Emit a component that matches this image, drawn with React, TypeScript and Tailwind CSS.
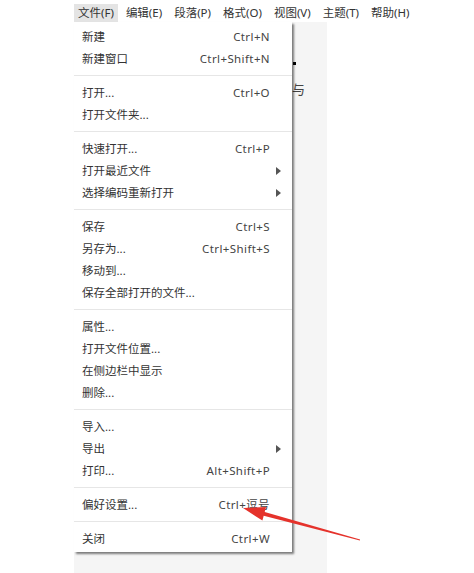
import React from 'react';

type Item = { label: string; shortcut?: string; sub?: boolean } | 'sep';

const menuBar = ['文件(F)', '编辑(E)', '段落(P)', '格式(O)', '视图(V)', '主题(T)', '帮助(H)'];

const items: Item[] = [
    { label: '新建', shortcut: 'Ctrl+N' },
    { label: '新建窗口', shortcut: 'Ctrl+Shift+N' },
    'sep',
    { label: '打开...', shortcut: 'Ctrl+O' },
    { label: '打开文件夹...' },
    'sep',
    { label: '快速打开...', shortcut: 'Ctrl+P' },
    { label: '打开最近文件', sub: true },
    { label: '选择编码重新打开', sub: true },
    'sep',
    { label: '保存', shortcut: 'Ctrl+S' },
    { label: '另存为...', shortcut: 'Ctrl+Shift+S' },
    { label: '移动到...' },
    { label: '保存全部打开的文件...' },
    'sep',
    { label: '属性...' },
    { label: '打开文件位置...' },
    { label: '在侧边栏中显示' },
    { label: '删除...' },
    'sep',
    { label: '导入...' },
    { label: '导出', sub: true },
    { label: '打印...', shortcut: 'Alt+Shift+P' },
    'sep',
    { label: '偏好设置...', shortcut: 'Ctrl+逗号' },
    'sep',
    { label: '关闭', shortcut: 'Ctrl+W' },
];

const font = { fontFamily: '"Noto Sans", "Noto Sans CJK SC", sans-serif' };

export default function App() {
    return (
        <div className="relative w-[474px] h-[573px] bg-white overflow-hidden text-[11.5px] text-[#333]" style={font}>
            {/* menu bar */}
            <div className="flex h-[22px] pl-[74px] pt-[4px] gap-[4px]">
                {menuBar.map((m, i) => (
                    <div key={m} className={`flex items-center h-[18px] px-[4px] ${i === 0 ? 'bg-[#e4e4e4]' : ''}`}>
                        {m}
                    </div>
                ))}
            </div>

            {/* editor panel behind the menu */}
            <div className="relative ml-[74px] w-[253px] h-[551px] bg-[#f5f5f5]">
                <div className="pl-[218px] pt-[40px] flex flex-col">
                    <span className="ml-[1px] w-[3px] h-[3px] bg-black"></span>
                    <span className="mt-[14px] text-[13px] leading-[20px] text-[#444]">与</span>
                </div>

                {/* dropdown */}
                <div className="absolute left-0 top-0 w-[218px] bg-white pt-[4px] pb-[2px] shadow-[2px_2px_2px_rgba(0,0,0,0.5)]">
                    {items.map((it, i) =>
                        it === 'sep' ? (
                            <div key={i} className="h-px mt-[5px] mb-[6px] bg-[#e6e6e6]"></div>
                        ) : (
                            <div key={i} className="flex items-center justify-between h-[22px] pl-[8px] pr-[8px]">
                                <span>{it.label}</span>
                                {it.shortcut && <span className="mr-[14px] text-[#444] tracking-[0.4px]">{it.shortcut}</span>}
                                {it.sub && (
                                    <svg width="5" height="8" viewBox="0 0 5 8" className="mr-[3px]">
                                        <path d="M0 0 L5 4 L0 8 Z" fill="#555" />
                                    </svg>
                                )}
                            </div>
                        )
                    )}
                </div>
            </div>

            {/* red annotation arrow */}
            <svg className="absolute left-0 top-0 pointer-events-none" width="474" height="573">
                <polygon
                    points="243,508 266,507 264.7,511.9 360.1,539.5 359.9,540.5 263.7,515.7 262.4,520.6"
                    fill="#e5322b"
                />
            </svg>
        </div>
    );
}
